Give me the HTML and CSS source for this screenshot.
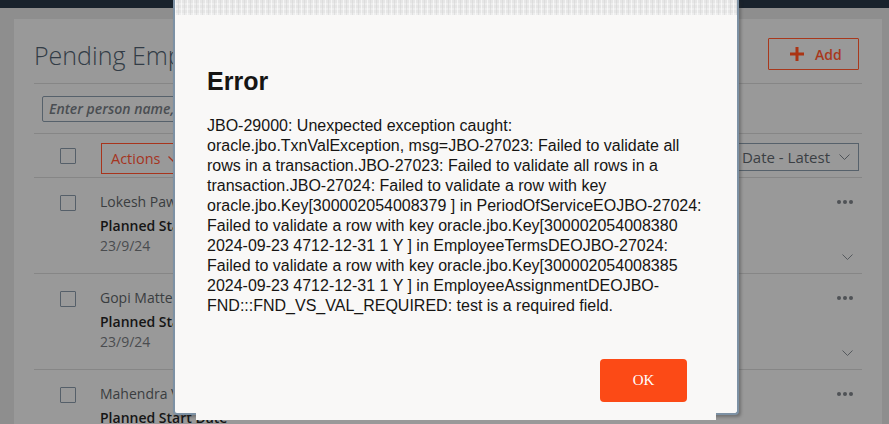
FILE: index.html
```html
<!DOCTYPE html>
<html lang="en">
<head>
<meta charset="utf-8">
<title>Pending Employees - Error</title>
<link rel="stylesheet" href="styles.css">
</head>
<body>
<div class="topbar"></div>
<main class="card">
  <header class="card-head">
    <h1 class="title">Pending Employee Assignments</h1>
    <button class="btn-add" type="button">
      <svg class="plus" width="14" height="14" viewBox="0 0 14 14"><path d="M7 0v14M0 7h14" stroke="currentColor" stroke-width="3"/></svg>
      <span>Add</span>
    </button>
  </header>
  <div class="search-row">
    <div class="search">Enter person name, person number or keywords</div>
  </div>
  <div class="toolbar">
    <span class="checkbox"></span>
    <button class="btn-actions" type="button">Actions
      <svg width="10" height="6" viewBox="0 0 10 6"><path d="M0.5 0.5l4.5 4.5 4.5-4.5" fill="none" stroke="currentColor" stroke-width="1.3"/></svg>
    </button>
    <div class="sort">Planned Start Date - Latest
      <svg width="11" height="6" viewBox="0 0 11 6"><path d="M0.5 0.5l5 5 5-5" fill="none" stroke="currentColor" stroke-width="1"/></svg>
    </div>
  </div>
  <ul class="list">
    <li class="row">
      <span class="checkbox"></span>
      <div class="row-main">
        <div class="name">Lokesh Pawar</div>
        <div class="label">Planned Start Date</div>
        <div class="date">23/9/24</div>
      </div>
      <div class="row-side">
        <span class="dots"><i></i><i></i><i></i></span>
        <svg class="chev" width="11" height="6" viewBox="0 0 11 6"><path d="M0.5 0.5l5 5 5-5" fill="none" stroke="currentColor" stroke-width="1"/></svg>
      </div>
    </li>
    <li class="row">
      <span class="checkbox"></span>
      <div class="row-main">
        <div class="name">Gopi Mattepu</div>
        <div class="label">Planned Start Date</div>
        <div class="date">23/9/24</div>
      </div>
      <div class="row-side">
        <span class="dots"><i></i><i></i><i></i></span>
        <svg class="chev" width="11" height="6" viewBox="0 0 11 6"><path d="M0.5 0.5l5 5 5-5" fill="none" stroke="currentColor" stroke-width="1"/></svg>
      </div>
    </li>
    <li class="row">
      <span class="checkbox"></span>
      <div class="row-main">
        <div class="name">Mahendra Varma</div>
        <div class="label">Planned Start Date</div>
        <div class="date">23/9/24</div>
      </div>
      <div class="row-side">
        <span class="dots"><i></i><i></i><i></i></span>
        <svg class="chev" width="11" height="6" viewBox="0 0 11 6"><path d="M0.5 0.5l5 5 5-5" fill="none" stroke="currentColor" stroke-width="1"/></svg>
      </div>
    </li>
  </ul>
</main>

<div class="modal" role="dialog">
  <div class="modal-strip"></div>
  <div class="modal-content">
    <h2 class="modal-title">Error</h2>
    <p class="modal-text">JBO-29000: Unexpected exception caught:<br>oracle.jbo.TxnValException, msg=JBO-27023: Failed to validate all<br>rows in a transaction.JBO-27023: Failed to validate all rows in a<br>transaction.JBO-27024: Failed to validate a row with key<br>oracle.jbo.Key[300002054008379 ] in PeriodOfServiceEOJBO-27024:<br>Failed to validate a row with key oracle.jbo.Key[300002054008380<br>2024-09-23 4712-12-31 1 Y ] in EmployeeTermsDEOJBO-27024:<br>Failed to validate a row with key oracle.jbo.Key[300002054008385<br>2024-09-23 4712-12-31 1 Y ] in EmployeeAssignmentDEOJBO-<br>FND:::FND_VS_VAL_REQUIRED: test is a required field.</p>
    <div class="modal-foot">
      <button class="btn-ok" type="button">OK</button>
    </div>
  </div>
</div>
</body>
</html>
```
FILE: styles.css
```css
* { box-sizing: border-box; }
html, body { margin: 0; padding: 0; }
body {
  width: 889px;
  height: 424px;
  overflow: hidden;
  background: #8e8e8e;
  font-family: "Open Sans", "Noto Sans", sans-serif;
  position: relative;
}
.topbar {
  height: 8px;
  background: #19222c;
}
.card {
  margin: 11px 7px 0 14px;
  background: #999999;
  padding: 0 20px;
  height: 405px;
  overflow: hidden;
}
.card-head {
  display: flex;
  justify-content: space-between;
  align-items: flex-start;
  height: 65px;
  padding-top: 19px;
  border-bottom: 1px solid #868686;
}
.title {
  margin: 0;
  font-size: 25px;
  font-weight: 300;
  line-height: 34px;
  color: #323c46;
  white-space: nowrap;
}
.btn-add {
  display: flex;
  align-items: center;
  gap: 11px;
  width: 91px;
  height: 32px;
  margin-right: 3px;
  padding: 0 0 0 21px;
  border: 1px solid #a8381c;
  border-radius: 1px;
  background: transparent;
  color: #a8381c;
  font-family: "Open Sans", "Noto Sans", sans-serif;
  font-size: 14px;
  font-weight: 600;
}
.btn-add .plus { color: #ab3414; }
.search-row {
  height: 50px;
  padding: 12px 0 0 8px;
  border-bottom: 1px solid #868686;
}
.search {
  width: 460px;
  height: 26px;
  border: 1px solid #56616b;
  border-radius: 2px;
  padding: 0 6px;
  font-size: 14px;
  line-height: 24px;
  font-style: italic;
  font-weight: 600;
  color: #4a4e52;
  white-space: nowrap;
  overflow: hidden;
}
.toolbar {
  display: flex;
  align-items: flex-start;
  height: 44px;
  padding: 9px 3px 0 26px;
  border-bottom: 1px solid #868686;
}
.checkbox {
  flex: none;
  width: 16px;
  height: 16px;
  border: 1px solid #555f69;
  border-radius: 1px;
}
.toolbar .checkbox { margin-top: 5px; }
.btn-actions {
  display: flex;
  align-items: center;
  gap: 8px;
  margin-left: 25px;
  height: 31px;
  padding: 0 12px 0 9px;
  border: 1px solid #a8341c;
  background: transparent;
  color: #a5341f;
  font-family: "Open Sans", "Noto Sans", sans-serif;
  font-size: 14.5px;
  font-weight: 500;
}
.sort {
  display: flex;
  align-items: center;
  gap: 9px;
  margin-left: auto;
  height: 28px;
  padding: 0 8px 0 12px;
  border: 1px solid #56616b;
  font-size: 15px;
  color: #3b3f44;
  white-space: nowrap;
}
.sort svg { color: #4e5358; }
.list {
  list-style: none;
  margin: 0;
  padding: 0;
}
.row {
  display: flex;
  align-items: flex-start;
  height: 96px;
  padding: 14px 9px 0 26px;
  border-bottom: 1px solid #868686;
}
.row .checkbox { margin-top: 3px; }
.row-main {
  margin-left: 24px;
  font-size: 14px;
  line-height: 20px;
  white-space: nowrap;
}
.name { color: #3a3d40; margin-bottom: 4px; }
.label { color: #151515; font-weight: 600; }
.date { color: #4a4c4f; }
.row-side {
  margin-left: auto;
  height: 73px;
  display: flex;
  flex-direction: column;
  justify-content: space-between;
  align-items: flex-end;
  padding-top: 8px;
}
.dots {
  display: flex;
  gap: 2px;
}
.dots i {
  width: 4px;
  height: 4px;
  border-radius: 50%;
  background: #4f5256;
}
.chev { color: #55595d; margin-bottom: 5px; }

/* modal dialog */
.modal {
  position: absolute;
  left: 173px;
  top: 0;
  width: 566px;
  height: 415px;
  background: #f9f8f7;
  border: 2px solid #7d91a4;
  border-top: none;
  border-radius: 0 0 4px 4px;
  box-shadow: 2px 2px 3px rgba(40, 40, 40, 0.35);
}
.modal::after {
  content: "";
  position: absolute;
  left: 21px;
  right: 21px;
  bottom: -7px;
  height: 7px;
  background: #f9f8f7;
}
.modal-strip {
  height: 15px;
  background-color: #e6e6e6;
  background-image:
    repeating-linear-gradient(90deg, rgba(255,255,255,0.6) 0 1px, transparent 1px 3px, rgba(210,210,210,0.5) 3px 4px, transparent 4px 6px),
    repeating-linear-gradient(0deg, rgba(255,255,255,0.3) 0 2px, transparent 2px 5px);
}
.modal-content {
  padding: 0 50px 0 32px;
}
.modal-title {
  margin: 52px 0 0;
  font-family: "Liberation Sans", Arial, sans-serif;
  font-size: 25px;
  font-weight: 700;
  line-height: 28px;
  color: #161513;
}
.modal-text {
  margin: 21px 0 0;
  font-family: "Liberation Sans", Arial, sans-serif;
  font-size: 16px;
  line-height: 20px;
  color: #161513;
  white-space: nowrap;
}
.modal-foot {
  display: flex;
  justify-content: flex-end;
  margin-top: 43px;
}
.btn-ok {
  width: 87px;
  height: 43px;
  border: none;
  border-radius: 4px;
  background: #fc4a16;
  color: #ffffff;
  font-family: "Liberation Serif", "Times New Roman", serif;
  font-size: 15px;
}
```
